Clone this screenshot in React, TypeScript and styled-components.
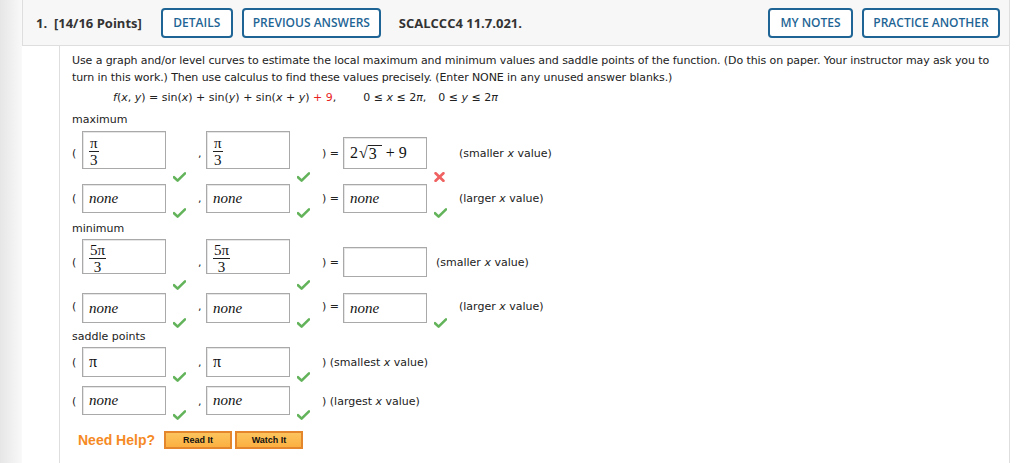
import React from 'react';
import styled, { createGlobalStyle } from 'styled-components';

const GlobalStyle = createGlobalStyle`
  html, body {
    margin: 0;
    padding: 0;
    background: #ffffff;
  }
  body {
    overflow: hidden;
  }
`;

const Page = styled.div`
  display: flex;
  height: 463px;
  width: 1024px;
`;

const Shade = styled.div`
  width: 22px;
  flex: none;
  background: linear-gradient(to right, #e6e6e6, #f9f9f9);
`;

const Main = styled.div`
  width: 988px;
  flex: none;
  display: flex;
  flex-direction: column;
`;

const Header = styled.div`
  box-sizing: border-box;
  height: 46px;
  display: flex;
  align-items: center;
  padding: 0 9px 0 13px;
  background: #f7f7f7;
  border: 1px solid #dedede;
  border-top: none;
  font-family: "Open Sans", sans-serif;
`;

const QTitle = styled.span`
  font-size: 13px;
  font-weight: 700;
  color: #333;
  white-space: pre;
  margin-right: 19px;
`;

const OutlineButton = styled.button<{ $w: number }>`
  box-sizing: border-box;
  width: ${p => p.$w}px;
  height: 30px;
  padding: 0;
  margin-right: 9px;
  border: 2px solid #1e6595;
  border-radius: 4px;
  background: #fff;
  color: #1e6595;
  font-family: "Open Sans", sans-serif;
  font-size: 12px;
  font-weight: 600;
  text-transform: uppercase;
  &:last-child {
    margin-right: 0;
  }
`;

const BookRef = styled.span`
  margin-left: 9px;
  font-size: 13px;
  font-weight: 700;
  color: #333;
`;

const Spacer = styled.div`
  flex: 1;
`;

const Body = styled.div`
  flex: 1;
  margin-left: 37px;
  padding: 6px 0 0 12px;
  border-left: 1px solid #dedede;
  border-right: 1px solid #dedede;
  font-family: "DejaVu Sans", Verdana, sans-serif;
  font-size: 11px;
  color: #222;
`;

const Prompt = styled.div`
  line-height: 17px;
  white-space: nowrap;
  letter-spacing: -0.095px;
`;

const Formula = styled.div`
  margin-top: 4px;
  margin-left: 41px;
  line-height: 16px;
  white-space: pre;
`;

const Gap = styled.span<{ $w: number }>`
  display: inline-block;
  width: ${p => p.$w}px;
`;

const Red = styled.span`
  color: #e8231f;
`;

const SectionLabel = styled.div<{ $mt: number }>`
  margin-top: ${p => p.$mt}px;
  line-height: 14px;
`;

const Row = styled.div<{ $h: number; $mt: number; $tt: number; $mk: number }>`
  display: flex;
  align-items: flex-start;
  height: ${p => p.$h}px;
  margin-top: ${p => p.$mt}px;
  --text-top: ${p => p.$tt}px;
  --mark-top: ${p => p.$mk}px;
`;

const Txt = styled.span<{ $w?: number; $ml?: number }>`
  flex: none;
  ${p => (p.$w ? `width: ${p.$w}px;` : '')}
  margin-left: ${p => p.$ml ?? 0}px;
  margin-top: var(--text-top);
  line-height: 14px;
  white-space: pre;
`;

const Box = styled.div<{ $h: number; $top?: number }>`
  box-sizing: border-box;
  flex: none;
  width: 84px;
  height: ${p => p.$h}px;
  margin-top: ${p => p.$top ?? 0}px;
  padding-left: 6px;
  display: flex;
  align-items: center;
  border: 1px solid #a9a9a9;
  box-shadow: inset 1px 1px 0 #e6e6e6;
  background: #fff;
  font-family: "Liberation Serif", "Times New Roman", serif;
  font-size: 16px;
  color: #111;
`;

const Frac = styled.span`
  display: inline-flex;
  flex-direction: column;
  align-items: center;
  font-size: 15px;
  line-height: 12px;
  margin-top: 3px;
`;

const Num = styled.span`
  padding: 0 1px 2px;
  border-bottom: 1px solid #222;
`;

const Den = styled.span`
  padding-top: 2px;
`;

const Ital = styled.span`
  font-style: italic;
  font-size: 15px;
`;

const Root = styled.span`
  display: inline-flex;
  align-items: flex-start;
  margin: 0 4px 0 1px;
`;

const Radicand = styled.span`
  border-top: 1px solid #222;
  line-height: 15px;
  padding: 0 5px 0 1px;
  margin-top: 1px;
`;

const MarkSlot = styled.span`
  box-sizing: border-box;
  flex: none;
  width: 32px;
  padding-left: 7px;
  display: flex;
  & > svg {
    margin-top: var(--mark-top);
  }
`;

const HelpRow = styled.div`
  display: flex;
  align-items: center;
  margin-top: 16px;
  margin-left: 6px;
  height: 18px;
`;

const NeedHelp = styled.span`
  font-family: "Liberation Sans", Arial, sans-serif;
  font-size: 14px;
  font-weight: 700;
  color: #f58a25;
  margin-right: 9px;
`;

const HelpButton = styled.button`
  box-sizing: border-box;
  width: 68px;
  height: 18px;
  padding: 0;
  margin-right: 3px;
  border: 2px solid #e3862c;
  background: linear-gradient(#fcc45e, #fbb040);
  font-family: "Liberation Sans", Arial, sans-serif;
  font-size: 9px;
  font-weight: 700;
  color: #111;
`;

const Check = () => (
  <svg width="13" height="10" viewBox="0 0 13 10">
    <path d="M1 5.2 L4.6 8.6 L12 1.4" fill="none" stroke="#62b35a" strokeWidth="2.6" strokeLinecap="round" strokeLinejoin="round" />
  </svg>
);

const Cross = () => (
  <svg width="11" height="10" viewBox="0 0 11 10">
    <path d="M1.6 1.3 L9.4 8.7 M9.4 1.3 L1.6 8.7" fill="none" stroke="#f06262" strokeWidth="2.7" strokeLinecap="round" />
  </svg>
);

const Mark = ({ kind }: { kind: 'ok' | 'bad' }) => (
  <MarkSlot>{kind === 'ok' ? <Check /> : <Cross />}</MarkSlot>
);

const Fraction = ({ top, bottom }: { top: string; bottom: string }) => (
  <Frac>
    <Num>{top}</Num>
    <Den>{bottom}</Den>
  </Frac>
);

const None = () => <Ital>none</Ital>;

const X = () => <i>x</i>;
const Y = () => <i>y</i>;

const App: React.FC = () => {
  return (
    <>
      <GlobalStyle />
      <Page>
        <Shade />
        <Main>
          <Header>
            <QTitle>{'1.  [14/16 Points]'}</QTitle>
            <OutlineButton $w={72}>Details</OutlineButton>
            <OutlineButton $w={139}>Previous Answers</OutlineButton>
            <BookRef>SCALCCC4 11.7.021.</BookRef>
            <Spacer />
            <OutlineButton $w={85}>My Notes</OutlineButton>
            <OutlineButton $w={138}>Practice Another</OutlineButton>
          </Header>
          <Body>
            <Prompt>
              Use a graph and/or level curves to estimate the local maximum and minimum values and saddle points of the function. (Do this on paper. Your instructor may ask you to
              <br />
              turn in this work.) Then use calculus to find these values precisely. (Enter NONE in any unused answer blanks.)
            </Prompt>
            <Formula>
              <i>f</i>(<X />, <Y />) = sin(<X />) + sin(<Y />) + sin(<X /> + <Y />) <Red>+ 9</Red>,<Gap $w={27} />0 ≤ <X /> ≤ 2<i>π</i>,<Gap $w={12} />0 ≤ <Y /> ≤ 2<i>π</i>
            </Formula>

            <SectionLabel $mt={7}>maximum</SectionLabel>
            <Row $h={38} $mt={4} $tt={16} $mk={41}>
              <Txt $w={10}>(</Txt>
              <Box $h={38}><Fraction top="π" bottom="3" /></Box>
              <Mark kind="ok" />
              <Txt $w={8}>,</Txt>
              <Box $h={38}><Fraction top="π" bottom="3" /></Box>
              <Mark kind="ok" />
              <Txt $w={21}>) =</Txt>
              <Box $h={32} $top={6}>
                2<Root>√<Radicand>3</Radicand></Root>+ 9
              </Box>
              <Mark kind="bad" />
              <Txt>(smaller <X /> value)</Txt>
            </Row>
            <Row $h={29} $mt={15} $tt={8} $mk={24}>
              <Txt $w={10}>(</Txt>
              <Box $h={29}><None /></Box>
              <Mark kind="ok" />
              <Txt $w={8}>,</Txt>
              <Box $h={29}><None /></Box>
              <Mark kind="ok" />
              <Txt $w={21}>) =</Txt>
              <Box $h={29}><None /></Box>
              <Mark kind="ok" />
              <Txt>(larger <X /> value)</Txt>
            </Row>

            <SectionLabel $mt={9}>minimum</SectionLabel>
            <Row $h={35} $mt={3} $tt={17} $mk={41}>
              <Txt $w={10}>(</Txt>
              <Box $h={35}><Fraction top="5π" bottom="3" /></Box>
              <Mark kind="ok" />
              <Txt $w={8}>,</Txt>
              <Box $h={35}><Fraction top="5π" bottom="3" /></Box>
              <Mark kind="ok" />
              <Txt $w={21}>) =</Txt>
              <Box $h={30} $top={8} />
              <Txt $ml={9}>(smaller <X /> value)</Txt>
            </Row>
            <Row $h={30} $mt={19} $tt={7} $mk={25}>
              <Txt $w={10}>(</Txt>
              <Box $h={30}><None /></Box>
              <Mark kind="ok" />
              <Txt $w={8}>,</Txt>
              <Box $h={30}><None /></Box>
              <Mark kind="ok" />
              <Txt $w={21}>) =</Txt>
              <Box $h={30}><None /></Box>
              <Mark kind="ok" />
              <Txt>(larger <X /> value)</Txt>
            </Row>

            <SectionLabel $mt={7}>saddle points</SectionLabel>
            <Row $h={30} $mt={3} $tt={9} $mk={25}>
              <Txt $w={10}>(</Txt>
              <Box $h={30}>π</Box>
              <Mark kind="ok" />
              <Txt $w={8}>,</Txt>
              <Box $h={30}>π</Box>
              <Mark kind="ok" />
              <Txt>) (smallest <X /> value)</Txt>
            </Row>
            <Row $h={29} $mt={9} $tt={9} $mk={24}>
              <Txt $w={10}>(</Txt>
              <Box $h={29}><None /></Box>
              <Mark kind="ok" />
              <Txt $w={8}>,</Txt>
              <Box $h={29}><None /></Box>
              <Mark kind="ok" />
              <Txt>) (largest <X /> value)</Txt>
            </Row>

            <HelpRow>
              <NeedHelp>Need Help?</NeedHelp>
              <HelpButton>Read It</HelpButton>
              <HelpButton>Watch It</HelpButton>
            </HelpRow>
          </Body>
        </Main>
      </Page>
    </>
  );
};

export default App;
